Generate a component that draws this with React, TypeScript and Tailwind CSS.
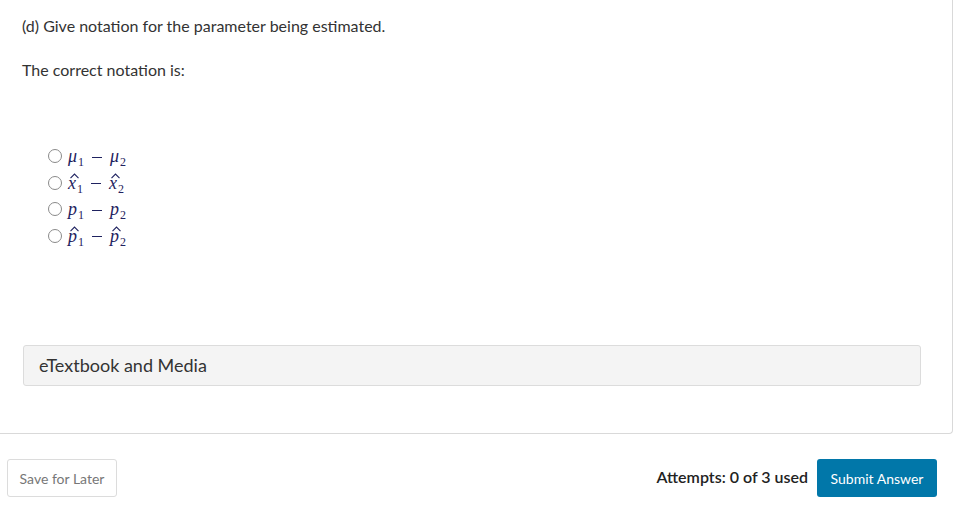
import React from "react";

function Hat() {
  return (
    <svg
      className="absolute left-[2px] top-[-1px]"
      width="9"
      height="6"
      viewBox="0 0 9 6"
      fill="none"
      stroke="#1f2260"
      strokeWidth="1.1"
    >
      <path d="M0.5 5.2 L4.5 1 L8.5 5.2" />
    </svg>
  );
}

function MathSub({ base, sub, hat }: { base: string; sub: string; hat?: boolean }) {
  return (
    <span className="relative inline-block">
      {hat && <Hat />}
      <span style={{ fontStyle: "italic" }}>{base}</span>
      <span className="text-[12px] relative top-[4px] ml-[1px]" style={{ fontStyle: "normal" }}>
        {sub}
      </span>
    </span>
  );
}

function Option({ base, hat }: { base: string; hat?: boolean }) {
  return (
    <label className="flex items-center h-[26.5px]">
      <span className="w-[14px] h-[14px] rounded-full border border-[#8a8a8a] bg-white ml-[48px] mr-[6px]" />
      <span
        className="text-[18px] text-[#1f2260] leading-none flex items-center"
        style={{ fontFamily: "'Liberation Serif', 'DejaVu Serif', serif" }}
      >
        <MathSub base={base} sub="1" hat={hat} />
        <span className="mx-[8px] w-[10px] h-[1px] bg-[#1f2260] relative top-[1px]" aria-label="minus" />
        <MathSub base={base} sub="2" hat={hat} />
      </span>
    </label>
  );
}

export default function App() {
  return (
    <div className="w-[954px] h-[512px] bg-white text-[#333] font-['Lato','Noto_Sans',sans-serif]">
      <div className="w-[953px] h-[434px] border-r border-b border-[#d9d9d9] rounded-br-[4px] flex flex-col">
        <p className="pl-[22px] pt-[16px] text-[16px] leading-[20px]">
          (d) Give notation for the parameter being estimated.
        </p>
        <p className="pl-[22px] pt-[24px] text-[16px] leading-[20px]">The correct notation is:</p>
        <div className="mt-[63px] flex flex-col">
          <Option base="μ" />
          <Option base="x" hat />
          <Option base="p" />
          <Option base="p" hat />
        </div>
        <div className="mt-[96px] ml-[23px] w-[898px] h-[41px] bg-[#f4f4f4] border border-[#dcdcdc] rounded-[3px] flex items-center pl-[15px] text-[18px] text-[#333]">
          eTextbook and Media
        </div>
      </div>
      <div className="flex items-center mt-[25px] pl-[7px] pr-[17px]">
        <button className="h-[38px] w-[110px] border border-[#dcdcdc] rounded-[3px] bg-white text-[14px] text-[#777]">
          Save for Later
        </button>
        <div className="flex-1" />
        <span className="text-[16px] font-semibold text-[#222] mr-[9px] relative top-[-1px]">Attempts: 0 of 3 used</span>
        <button className="h-[38px] w-[120px] rounded-[3px] bg-[#0177a9] text-white text-[14px]">
          Submit Answer
        </button>
      </div>
    </div>
  );
}
